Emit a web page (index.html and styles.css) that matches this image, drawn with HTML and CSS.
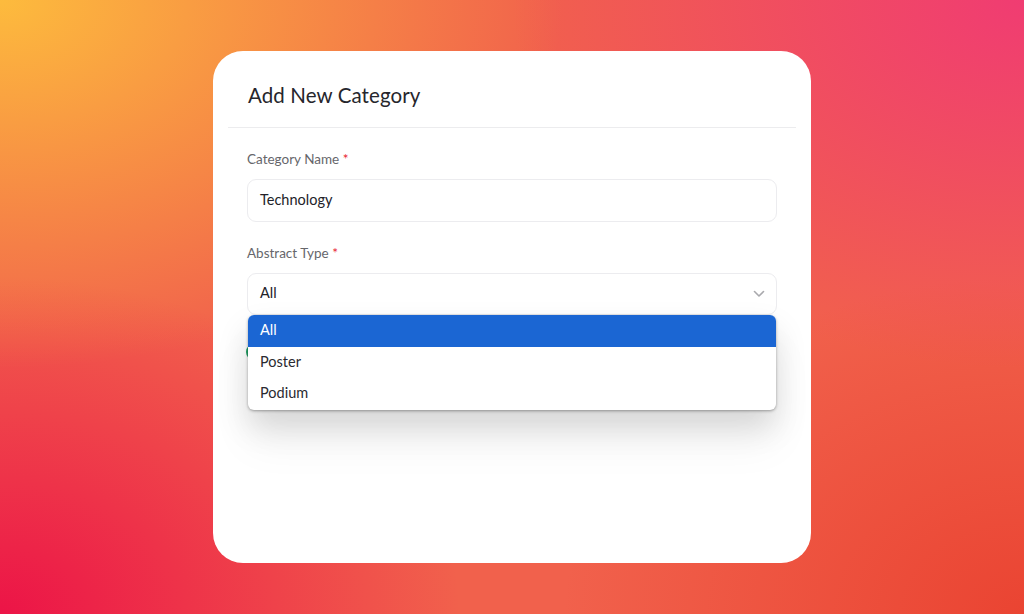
FILE: index.html
```html
<!DOCTYPE html>
<html lang="en">
<head>
<meta charset="utf-8">
<title>Add New Category</title>
<link rel="stylesheet" href="styles.css">
</head>
<body>
<main class="stage">
  <section class="card">
    <header class="card-header">
      <h1 class="card-title">Add New Category</h1>
    </header>
    <form class="card-body">
      <div class="field">
        <label class="label">Category Name <span class="req">*</span></label>
        <div class="input">Technology</div>
      </div>
      <div class="field field-select">
        <label class="label">Abstract Type <span class="req">*</span></label>
        <div class="select">
          <span>All</span>
          <svg class="chev" width="12" height="8" viewBox="0 0 12 8"><path d="M1.5 1.5 6 6l4.5-4.5" fill="none" stroke="#a9a9ad" stroke-width="1.6" stroke-linecap="round" stroke-linejoin="round"/></svg>
        </div>
        <ul class="menu">
          <li class="opt active">All</li>
          <li class="opt">Poster</li>
          <li class="opt">Podium</li>
        </ul>
      </div>
      <div class="toggle-row">
        <span class="toggle"></span>
      </div>
    </form>
  </section>
</main>
</body>
</html>
```

FILE: styles.css
```css
* { box-sizing: border-box; }
html, body { margin: 0; padding: 0; }
body {
  width: 1024px;
  height: 614px;
  overflow: hidden;
  font-family: "Lato", "Noto Sans", sans-serif;
  background:
    radial-gradient(ellipse 55% 60% at 0% 0%, #fdbb3d 0%, rgba(253,187,61,0) 100%),
    radial-gradient(ellipse 50% 60% at 100% 0%, #f03c72 0%, rgba(240,60,114,0) 100%),
    radial-gradient(ellipse 45% 55% at 0% 100%, #ec1447 0%, rgba(236,20,71,0) 100%),
    radial-gradient(ellipse 45% 55% at 100% 100%, #ea4432 0%, rgba(234,68,50,0) 100%),
    #f1614c;
}
.stage {
  height: 614px;
  display: flex;
  align-items: center;
  justify-content: center;
}
.card {
  width: 598px;
  height: 512px;
  background: #fff;
  border-radius: 30px;
  display: flex;
  flex-direction: column;
}
.card-header {
  height: 77px;
  margin: 0 15px;
  padding: 0 20px;
  border-bottom: 1px solid #ececee;
  display: flex;
  align-items: center;
}
.card-title {
  margin: 11px 0 0;
  font-size: 20.5px;
  font-weight: 400;
  color: #26262c;
  letter-spacing: 0.1px;
}
.card-body {
  margin: 0;
  padding: 22px 34px 0 34px;
  display: flex;
  flex-direction: column;
}
.field { display: flex; flex-direction: column; }
.field + .field { margin-top: 22px; }
.field-select { position: relative; }
.label {
  font-size: 13.5px;
  line-height: 18px;
  color: #66666b;
  margin-bottom: 11px;
}
.req { color: #e8232e; }
.input, .select {
  height: 43px;
  border: 1px solid #ececef;
  border-radius: 9px;
  padding: 0 12px 3px;
  display: flex;
  align-items: center;
  font-size: 14.5px;
  color: #222228;
}
.select {
  height: 42px;
  justify-content: space-between;
  padding-right: 11px;
}
.chev { display: block; margin-top: 2px; }
.menu {
  position: absolute;
  left: 1px;
  right: 1px;
  top: 100%;
  margin: 0;
  padding: 0;
  list-style: none;
  background: #fff;
  border-radius: 6px;
  overflow: hidden;
  z-index: 2;
  box-shadow: 0 1px 3px rgba(0,0,0,0.35), 0 16px 32px rgba(0,0,0,0.13), 0 34px 44px rgba(0,0,0,0.05);
}
.opt {
  height: 31.5px;
  display: flex;
  align-items: center;
  padding: 0 12px 2px;
  font-size: 14.5px;
  color: #2a2a30;
}
.opt.active {
  background: #1b66d3;
  color: #fff;
}
.toggle-row {
  margin-top: 28px;
  display: flex;
  align-items: center;
}
.toggle {
  width: 34px;
  height: 18px;
  border-radius: 9px;
  background: #22a466;
  margin-left: -1px;
}
```
